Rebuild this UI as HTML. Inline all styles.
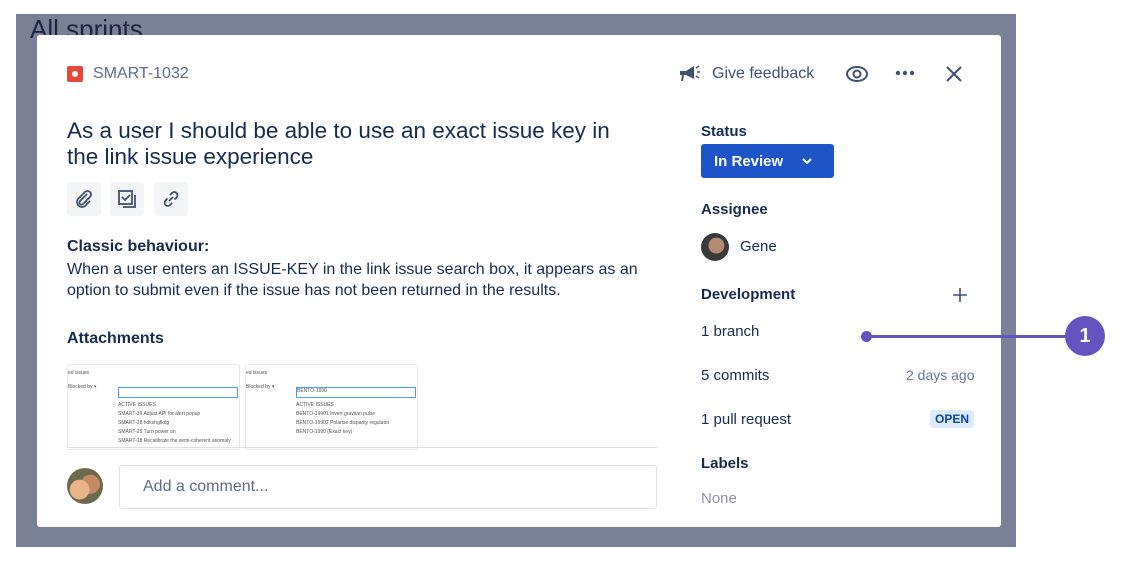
<!DOCTYPE html>
<html><head><style>
body{margin:0;width:1122px;height:564px;background:#fff;position:relative;overflow:hidden;font-family:"Liberation Sans",sans-serif;color:#172b4d}
.bd{position:absolute;left:16px;top:14px;width:1000px;height:533px;background:#7a8196}
.modal{position:absolute;left:37px;top:35px;width:964px;height:492px;background:#fff;border-radius:3px}
.a{position:absolute;white-space:nowrap}
.ib{position:absolute;top:182px;width:34px;height:34px;background:#f4f5f7;border-radius:3px}
.h{font-weight:bold;font-size:15px;color:#172b4d}
.t{font-size:15px}
</style></head><body>
<div class="bd"></div>
<div class="a" style="left:30px;top:14px;font-size:26px;color:#1c2540">All sprints</div>
<div class="modal"></div>
<div class="a" style="left:67px;top:66px;width:16px;height:16px;background:#e5493a;border-radius:2px"></div>
<div class="a" style="left:72px;top:71px;width:6px;height:6px;background:#fff;border-radius:50%"></div>
<div class="a" style="left:93px;top:65px;font-size:16px;color:#5e6c84">SMART-1032</div>
<svg class="a" style="left:678px;top:63px" width="24" height="22" viewBox="0 0 24 22"><path d="M2 8h6l8-5v13l-8-4H2z" fill="#42526e"/><path d="M5 12l-1 6" stroke="#42526e" stroke-width="2"/><path d="M18 5l3-2M19 9h3M18 13l3 2" stroke="#42526e" stroke-width="1.6"/></svg>
<div class="a" style="left:712px;top:65px;font-size:16px;color:#42526e">Give feedback</div>
<svg class="a" style="left:845px;top:63px" width="24" height="22"><ellipse cx="12" cy="11" rx="10" ry="7" fill="none" stroke="#42526e" stroke-width="2"/><circle cx="12" cy="11" r="3.5" fill="none" stroke="#42526e" stroke-width="2"/></svg>
<svg class="a" style="left:894px;top:66px" width="24" height="14"><circle cx="4" cy="7" r="2.2" fill="#42526e"/><circle cx="11" cy="7" r="2.2" fill="#42526e"/><circle cx="18" cy="7" r="2.2" fill="#42526e"/></svg>
<svg class="a" style="left:944px;top:64px" width="20" height="20"><path d="M3 3l14 14M17 3L3 17" stroke="#42526e" stroke-width="2"/></svg>
<div class="a" style="left:67px;top:118px;font-size:22.5px;line-height:26px;color:#172b4d;white-space:normal;width:575px">As a user I should be able to use an exact issue key in the link issue experience</div>
<div class="ib" style="left:67px"></div><div class="ib" style="left:110px"></div><div class="ib" style="left:154px"></div>
<svg class="a" style="left:74px;top:189px" width="20" height="20" viewBox="0 0 20 20"><path d="M13 5l-7 7a2 2 0 0 0 3 3l7-7a3.5 3.5 0 0 0-5-5l-7 7a5 5 0 0 0 7 7l5-5" fill="none" stroke="#42526e" stroke-width="1.8"/></svg>
<svg class="a" style="left:117px;top:189px" width="20" height="20"><rect x="2" y="2" width="13" height="13" fill="none" stroke="#42526e" stroke-width="1.8"/><path d="M18 6v12H6" fill="none" stroke="#42526e" stroke-width="1.8"/><path d="M5 8l3 3 5-5" fill="none" stroke="#42526e" stroke-width="1.8"/></svg>
<svg class="a" style="left:161px;top:189px" width="20" height="20"><path d="M8 12l4-4M9 6l2-2a3 3 0 0 1 4.5 4.5l-2 2M11 14l-2 2a3 3 0 0 1-4.5-4.5l2-2" fill="none" stroke="#42526e" stroke-width="1.8"/></svg>
<div class="a h" style="left:67px;top:238px;font-size:16px">Classic behaviour:</div>
<div class="a t" style="left:67px;top:259px;line-height:21px;white-space:normal;width:590px;font-size:16px">When a user enters an ISSUE-KEY in the link issue search box, it appears as an option to submit even if the issue has not been returned in the results.</div>
<div class="a h" style="left:67px;top:330px;font-size:16px">Attachments</div>
<div class="a" style="left:67px;top:364px;width:171px;height:84px;border:1px solid #e6e8ec;border-radius:3px;font-size:5px;color:#555;overflow:hidden">
<div style="margin:5px 0 0 0">ed issues</div><div style="margin:8px 0 0 0">Blocked by ▾</div>
<div style="position:absolute;left:50px;top:22px;width:118px;height:9px;border:1px solid #4c9aff"></div>
<div style="position:absolute;left:50px;top:36px;line-height:9px">ACTIVE ISSUES<br>SMART-39 Adjust API for alert popup<br>SMART-28 hdkshgfkdg<br>SMART-25 Turn power on<br>SMART-18 Recalibrate the semi-coherent anomaly</div></div>
<div class="a" style="left:245px;top:364px;width:171px;height:84px;border:1px solid #e6e8ec;border-radius:3px;font-size:5px;color:#555;overflow:hidden">
<div style="margin:5px 0 0 0">ed issues</div><div style="margin:8px 0 0 0">Blocked by ▾</div>
<div style="position:absolute;left:50px;top:22px;width:118px;height:9px;border:1px solid #4c9aff">BENTO-1990</div>
<div style="position:absolute;left:50px;top:36px;line-height:9px">ACTIVE ISSUES<br>BENTO-19901 Invert gravitan pulse<br>BENTO-19902 Polarise disparity regulator<br>BENTO-1990 (Exact key)</div></div>
<div class="a" style="left:67px;top:447px;width:590px;height:1px;background:#dfe1e6"></div>
<div class="a" style="left:67px;top:468px;width:36px;height:36px;border-radius:50%;background:radial-gradient(circle at 35% 60%,#e9b48a 0 30%,transparent 32%),radial-gradient(circle at 65% 45%,#c48a66 0 30%,transparent 32%),#6b6a4e"></div>
<div class="a" style="left:119px;top:465px;width:536px;height:42px;border:1px solid #dfe1e6;border-radius:3px"></div>
<div class="a" style="left:143px;top:478px;font-size:16px;color:#5e6c84">Add a comment...</div>
<div class="a h" style="left:701px;top:123px">Status</div>
<div class="a" style="left:701px;top:144px;width:133px;height:34px;background:#1d55c8;border-radius:3px"></div>
<div class="a" style="left:714px;top:153px;font-size:15px;font-weight:bold;color:#fff">In Review</div>
<svg class="a" style="left:801px;top:157px" width="12" height="8"><path d="M2 2l4 4 4-4" fill="none" stroke="#fff" stroke-width="2"/></svg>
<div class="a h" style="left:701px;top:201px">Assignee</div>
<div class="a" style="left:701px;top:233px;width:28px;height:28px;border-radius:50%;background:radial-gradient(circle at 55% 45%,#b48a72 0 35%,#3a3a3a 38%)"></div>
<div class="a t" style="left:740px;top:238px">Gene</div>
<div class="a h" style="left:701px;top:286px">Development</div>
<svg class="a" style="left:952px;top:287px" width="16" height="16"><path d="M8 1v14M1 8h14" stroke="#42526e" stroke-width="1.6"/></svg>
<div class="a t" style="left:701px;top:323px">1 branch</div>
<div class="a t" style="left:701px;top:367px">5 commits</div>
<div class="a" style="left:906px;top:367px;font-size:14px;color:#6b778c">2 days ago</div>
<div class="a t" style="left:701px;top:411px">1 pull request</div>
<div class="a" style="left:930px;top:410px;width:44px;height:18px;background:#deebff;border-radius:3px;color:#0747a6;font-size:12px;font-weight:bold;text-align:center;line-height:18px">OPEN</div>
<div class="a h" style="left:701px;top:455px">Labels</div>
<div class="a t" style="left:701px;top:490px;color:#8993a4">None</div>
<div class="a" style="left:866px;top:335px;width:200px;height:3px;background:#6554c0"></div>
<div class="a" style="left:861px;top:331px;width:11px;height:11px;border-radius:50%;background:#6554c0"></div>
<div class="a" style="left:1065px;top:316px;width:40px;height:40px;border-radius:50%;background:#6554c0;color:#fff;font-size:20px;font-weight:bold;text-align:center;line-height:40px">1</div>
</body></html>
